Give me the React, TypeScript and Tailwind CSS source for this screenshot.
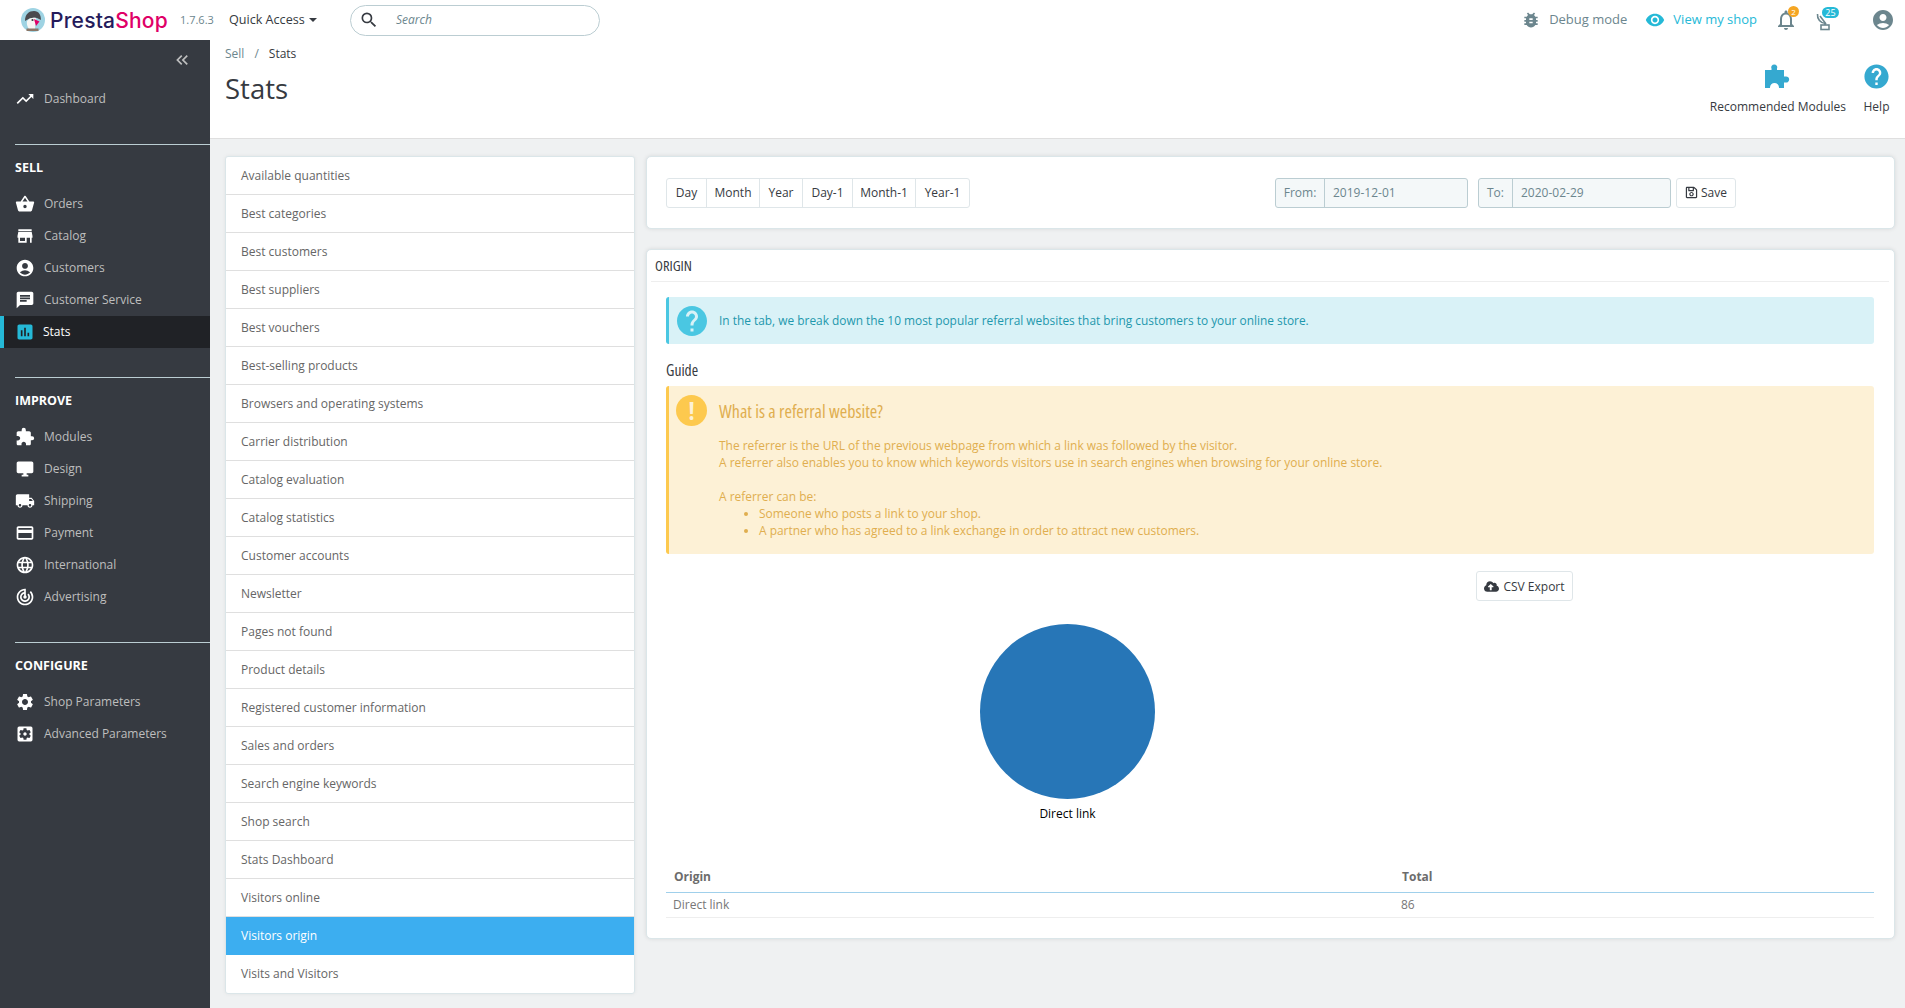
import { FaCloudUploadAlt, FaRegSave } from 'react-icons/fa';
import {
  MdAccountCircle,
  MdAssessment,
  MdBugReport,
  MdChat,
  MdDesktopWindows,
  MdExtension,
  MdHelp,
  MdKeyboardDoubleArrowLeft,
  MdLanguage,
  MdLocalShipping,
  MdNotificationsNone,
  MdPayment,
  MdSearch,
  MdSettings,
  MdSettingsApplications,
  MdShoppingBasket,
  MdStore,
  MdTrackChanges,
  MdTrendingUp,
  MdVisibility,
} from 'react-icons/md';
import type { IconType } from 'react-icons';

const sell: [string, IconType][] = [
  ['Orders', MdShoppingBasket],
  ['Catalog', MdStore],
  ['Customers', MdAccountCircle],
  ['Customer Service', MdChat],
  ['Stats', MdAssessment],
];

const improve: [string, IconType][] = [
  ['Modules', MdExtension],
  ['Design', MdDesktopWindows],
  ['Shipping', MdLocalShipping],
  ['Payment', MdPayment],
  ['International', MdLanguage],
  ['Advertising', MdTrackChanges],
];

const configure: [string, IconType][] = [
  ['Shop Parameters', MdSettings],
  ['Advanced Parameters', MdSettingsApplications],
];

const statsLinks = [
  'Available quantities',
  'Best categories',
  'Best customers',
  'Best suppliers',
  'Best vouchers',
  'Best-selling products',
  'Browsers and operating systems',
  'Carrier distribution',
  'Catalog evaluation',
  'Catalog statistics',
  'Customer accounts',
  'Newsletter',
  'Pages not found',
  'Product details',
  'Registered customer information',
  'Sales and orders',
  'Search engine keywords',
  'Shop search',
  'Stats Dashboard',
  'Visitors online',
  'Visitors origin',
  'Visits and Visitors',
];

const periods = ['Day', 'Month', 'Year', 'Day-1', 'Month-1', 'Year-1'];
const periodWidths = ['w-[39px]', 'w-[53px]', 'w-[43px]', 'w-[50px]', 'w-[63px]', 'w-[54px]'];

function NavItem({ label, icon: Icon }: { label: string; icon: IconType }) {
  const active = label === 'Stats';
  return (
    <div className={`flex h-8 items-center ${active ? 'border-l-4 border-[#25b9d7] bg-[#202226] pl-[11px]' : 'pl-[15px]'}`}>
      <Icon className={`h-5 w-5 shrink-0 ${active ? 'mr-2 text-[#25b9d7]' : 'mr-[9px] text-white'}`} />
      <span className={active ? 'text-white' : 'text-[#bebebe]'}>{label}</span>
    </div>
  );
}

function NavGroup({ title, items, top }: { title: string; items: [string, IconType][]; top: string }) {
  return (
    <div className={top}>
      <div className="ml-[15px] border-t border-[#bbcdd2]" />
      <div className="ml-[15px] mb-[11px] mt-[14px] text-[12.5px] leading-[18px] font-bold text-white">{title}</div>
      {items.map(([label, icon]) => (
        <NavItem key={label} label={label} icon={icon} />
      ))}
    </div>
  );
}

function DateField({ label, value, labelWidth }: { label: string; value: string; labelWidth: string }) {
  return (
    <div className="flex h-[30px] w-[193px] rounded-[3px] border border-[#bbcdd2] bg-[#f4f8f9] text-[#6c868e]">
      <div className={`flex items-center justify-center border-r border-[#bbcdd2] ${labelWidth}`}>{label}</div>
      <div className="flex flex-1 items-center pl-2">{value}</div>
    </div>
  );
}

export default function App() {
  return (
    <div className="h-[1008px] overflow-hidden bg-[#eff1f2] font-['Open_Sans',sans-serif] text-[12px] text-[#363a41]">
      {/* Top bar */}
      <header className="flex h-10 items-center bg-white">
        <svg viewBox="0 0 24 24" className="ml-[21px] h-6 w-6 shrink-0">
          <circle cx="12" cy="12" r="12" fill="#9ed3e3" />
          <path d="M4 13 C4 6 8 3 13 3 C18 3 20 7 20 12 L16 10 C12 9 8 10 4 13 Z" fill="#4a4a4f" />
          <path d="M6 13 C8 10 12 9 15 10 L14 21 H8 C6 18 5.5 16 6 13 Z" fill="#f6f6f4" />
          <path d="M13 11 L18.5 13.5 L15 18 Z" fill="#df0067" />
          <circle cx="11.5" cy="12" r="1.1" fill="#363a41" />
          <path d="M5.5 20.5 h12 v2.5 h-12 z" fill="#8a7768" />
        </svg>
        <div className="ml-[5px] w-[130px] font-['Inter',sans-serif] text-[21px] leading-none font-medium tracking-[0.2px] text-[#251b5b]">
          Presta<span className="text-[#df0067]">Shop</span>
        </div>
        <span className="w-[33px] text-[11px] text-[#6c868e]">1.7.6.3</span>
        <div className="ml-4 flex w-[88px] items-center whitespace-nowrap text-[12.6px] text-[#363a41]">
          Quick Access
          <span className="ml-1 border-x-[4px] border-t-[4px] border-x-transparent border-t-[#363a41]" />
        </div>
        <div className="ml-[33px] flex h-[31px] w-[250px] items-center rounded-full border border-[#bbcdd2] pl-2">
          <MdSearch className="h-5 w-5 text-[#363a41]" />
          <span className="ml-[17px] text-[12px] italic text-[#6c868e]">Search</span>
        </div>
        <div className="ml-auto flex items-center text-[13px]">
          <MdBugReport className="h-5 w-5 text-[#6c868e]" />
          <span className="ml-2 text-[#6c868e]">Debug mode</span>
          <MdVisibility className="ml-[18px] h-5 w-5 text-[#25b9d7]" />
          <span className="ml-2 text-[#25b9d7]">View my shop</span>
          <div className="relative ml-[17px] h-6 w-6">
            <MdNotificationsNone className="h-6 w-6 text-[#6c868e]" />
            <span className="absolute -top-[2px] left-[14px] flex h-[11px] w-[11px] items-center justify-center rounded-full bg-[#f5a623] text-[8px] text-white">2</span>
          </div>
          <div className="relative ml-[18px] h-6 w-4">
            <svg viewBox="0 0 16 20" fill="none" stroke="#6c868e" strokeWidth="1.6" className="mt-[3px] h-5 w-4">
              <path d="M1.5 3 C1 8 4.5 12 9.5 12.5" />
              <path d="M4 5 L10 13" />
              <rect x="5" y="14" width="8" height="4.5" />
              <path d="M9 12.5 V14" />
            </svg>
            <span className="absolute -top-[1px] left-[6px] flex h-[11px] w-[17px] items-center justify-center rounded-full bg-[#25b9d7] text-[9px] text-white">25</span>
          </div>
          <MdAccountCircle className="ml-[39px] mr-[10px] h-6 w-6 text-[#6c868e]" />
        </div>
      </header>

      <div className="flex h-[968px]">
        {/* Sidebar */}
        <aside className="w-[210px] shrink-0 bg-[#363a41]">
          <div className="flex h-[30px] items-end justify-end pr-[18px]">
            <MdKeyboardDoubleArrowLeft className="h-5 w-5 text-[#bebebe]" />
          </div>
          <div className="mt-[13px]">
            <NavItem label="Dashboard" icon={MdTrendingUp} />
          </div>
          <NavGroup title="SELL" items={sell} top="mt-[29px]" />
          <NavGroup title="IMPROVE" items={improve} top="mt-[29px]" />
          <NavGroup title="CONFIGURE" items={configure} top="mt-[29px]" />
        </aside>

        <main className="min-w-0 flex-1">
          {/* Page head */}
          <div className="relative h-[99px] border-b border-[#dfdfdf] bg-white pl-[15px] pt-[5px]">
            <div className="flex text-[12px] leading-[18px]">
              <span className="text-[#6c868e]">Sell</span>
              <span className="mx-[10px] text-[#6c868e]">/</span>
              <span>Stats</span>
            </div>
            <h1 className="mt-[7px] text-[27.5px] leading-[37px]">Stats</h1>
            <div className="absolute right-[14px] top-[24px] flex">
              <div className="flex flex-col items-center">
                <svg viewBox="0 0 26 25" className="-mt-[1px] h-[25px] w-[26px]">
                  <path
                    d="M0 7 H6.5 V5.6 A3 3 0 1 1 12 5.6 V7 H19 V13.6 H20.4 A3 3 0 1 1 20.4 19.4 H19 V25 H14 V24.5 A4.5 4.5 0 0 0 5 24.5 V25 H0 Z"
                    fill="#35a9d0"
                  />
                </svg>
                <span className="mt-[10px] leading-[18px]">Recommended Modules</span>
              </div>
              <div className="ml-4 flex flex-col items-center">
                <MdHelp className="-mt-[2px] h-[29px] w-[29px] text-[#35a9d0]" />
                <span className="mt-[7px] leading-[18px]">Help</span>
              </div>
            </div>
          </div>

          <div className="flex gap-[11px] pl-[15px] pr-[10px] pt-[17px]">
            {/* Stats list */}
            <nav className="h-[838px] w-[410px] shrink-0 rounded-[3px] border border-[#dbe6e9] bg-white text-[#666666] shadow-[0_0_4px_0_rgba(0,0,0,0.06)]">
              {statsLinks.map((link) => (
                <div
                  key={link}
                  className={`flex h-[38px] items-center pl-[15px] ${link === 'Visitors origin' ? 'bg-[#3caef0] text-white' : 'border-b border-[#dfdfdf] last:border-b-0'}`}
                >
                  {link}
                </div>
              ))}
            </nav>

            <div className="min-w-0 flex-1">
              {/* Date range */}
              <section className="flex h-[73px] items-center rounded-[5px] border border-[#dbe6e9] bg-white pl-[19px] pr-[158px] shadow-[0_0_4px_0_rgba(0,0,0,0.1)]">
                <div className="flex h-[30px] rounded-[3px] border border-[#dfe6e9]">
                  {periods.map((period, i) => (
                    <div key={period} className={`flex items-center justify-center ${periodWidths[i]} ${i > 0 ? 'border-l border-[#dfe6e9]' : ''}`}>
                      {period}
                    </div>
                  ))}
                </div>
                <div className="ml-auto flex items-center">
                  <DateField label="From:" value="2019-12-01" labelWidth="w-[49px]" />
                  <div className="ml-[10px]">
                    <DateField label="To:" value="2020-02-29" labelWidth="w-[34px]" />
                  </div>
                  <div className="ml-[5px] flex h-[30px] w-[60px] items-center justify-center rounded-[3px] border border-[#dfe6e9]">
                    <FaRegSave className="mr-[3px] h-[13px] w-[13px]" />
                    Save
                  </div>
                </div>
              </section>

              {/* Origin panel */}
              <section className="mt-[20px] h-[690px] rounded-[5px] border border-[#dbe6e9] bg-white pl-[19px] pr-[20px] pt-[1px] shadow-[0_0_4px_0_rgba(0,0,0,0.1)]">
                <div className="-mx-[15px] flex h-[31px] items-center border-b border-[#eeeeee] pb-[1px] pl-1 text-[14.5px] [font-stretch:75%]">
                  ORIGIN
                </div>

                <div className="mt-[15px] flex h-[47px] items-center rounded-[3px] border-l-[3px] border-[#4ac7e2] bg-[#d9f2f7] pl-[7px] text-[11.9px] text-[#1e98ad]">
                  <MdHelp className="mr-[7px] h-[36px] w-[36px] shrink-0 -translate-x-[2px] text-[#4ac7e2]" />
                  In the tab, we break down the 10 most popular referral websites that bring customers to your online store.
                </div>

                <div className="mt-[16px] text-[15.5px] leading-[20px] [font-stretch:75%]">Guide</div>

                <div className="mt-[6px] h-[168px] rounded-[3px] border-l-[3px] border-[#fdc94e] bg-[#fdf1d6] pl-[50px] pt-[14px] text-[#e0ae4f]">
                  <div className="relative text-[18px] leading-[22px] [font-stretch:75%]">
                    <span className="absolute -left-[43px] -top-[5px] flex h-[31px] w-[31px] items-center justify-center rounded-full bg-[#fdc94e] text-[24px] leading-none font-bold text-[#fdf1d6]">!</span>
                    What is a referral website?
                  </div>
                  <div className="mt-[15px] text-[11.95px] leading-[17px]">
                    <p>The referrer is the URL of the previous webpage from which a link was followed by the visitor.</p>
                    <p>A referrer also enables you to know which keywords visitors use in search engines when browsing for your online store.</p>
                    <p className="mt-[17px]">A referrer can be:</p>
                    <ul className="ml-[40px] list-disc">
                      <li>Someone who posts a link to your shop.</li>
                      <li>A partner who has agreed to a link exchange in order to attract new customers.</li>
                    </ul>
                  </div>
                </div>

                <div className="mt-[17px] ml-[810px] flex h-[30px] w-[97px] items-center justify-center rounded-[3px] border border-[#dfe6e9] pt-[1px]">
                  <FaCloudUploadAlt className="mr-1 h-[15px] w-[15px]" />
                  CSV Export
                </div>

                {/* Pie */}
                <svg viewBox="0 0 175 175" className="ml-[314px] mt-[23px] h-[175px] w-[175px]">
                  <circle cx="87.5" cy="87.5" r="87.5" fill="#2776b7" />
                </svg>
                <div className="ml-[314px] mt-[6px] w-[175px] text-center leading-[18px] text-black">Direct link</div>

                {/* Table */}
                <div className="mt-[39px] flex h-[31px] items-center border-b border-[#a0d0eb] font-bold text-[#6c6c6c]">
                  <div className="w-[736px] pl-2">Origin</div>
                  <div>Total</div>
                </div>
                <div className="flex h-[25px] items-center border-b border-[#eeeeee] text-[#777777]">
                  <div className="w-[735px] pl-[7px]">Direct link</div>
                  <div>86</div>
                </div>
              </section>
            </div>
          </div>
        </main>
      </div>
    </div>
  );
}
